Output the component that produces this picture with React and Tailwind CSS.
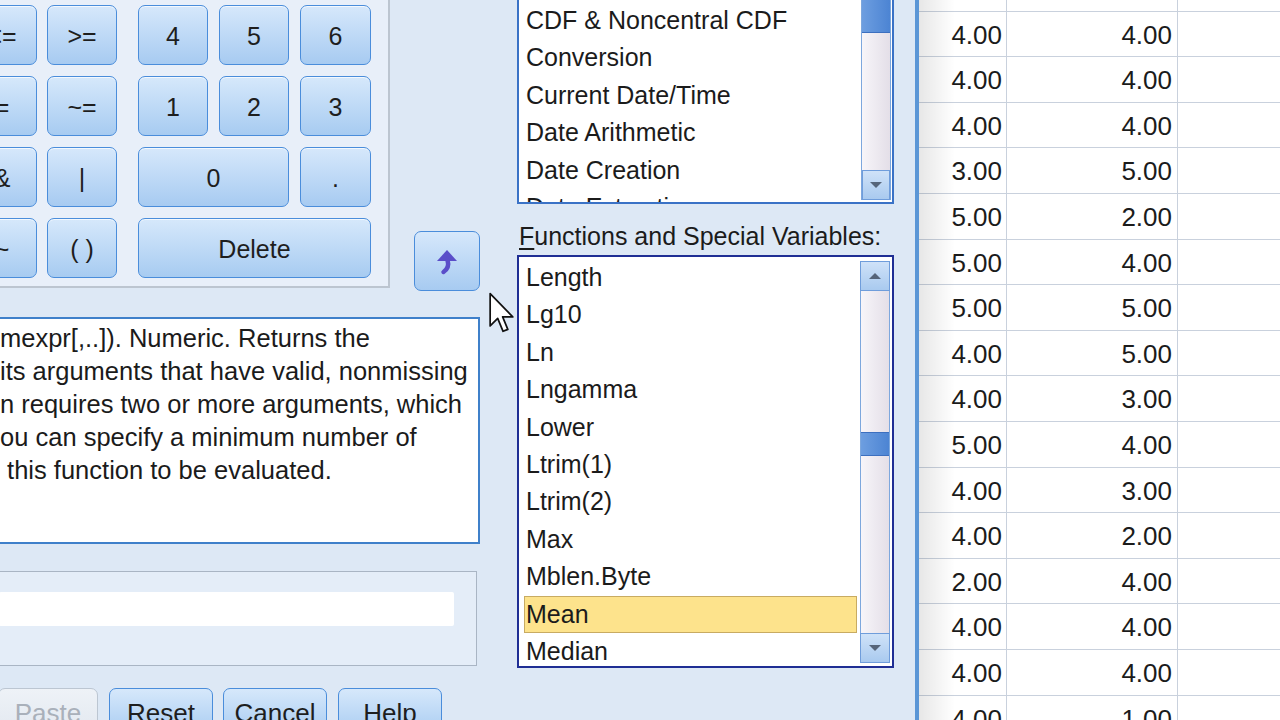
import React from "react";

const FONT = { fontFamily: '"Liberation Sans", Arial, sans-serif' };

function KeyBtn({ children, className = "" }) {
  return (
    <div
      className={
        "h-[60px] rounded-[7px] border-[1.5px] border-[#4a8ddb] bg-gradient-to-b from-[#d6e8fb] to-[#a7cbf1] flex items-center justify-center pt-[4px] text-[25px] text-[#1e1e1e] shadow-[inset_0_1px_0_rgba(255,255,255,0.7)] " +
        className
      }
    >
      {children}
    </div>
  );
}

function DlgBtn({ children, disabled = false, className = "" }) {
  return (
    <div
      className={
        "h-[48px] rounded-[7px] border-[1.5px] flex items-start pt-[5px] justify-center text-[26px] " +
        (disabled
          ? "border-[#bcc6d2] bg-gradient-to-b from-[#eef2f7] to-[#e2e8f0] text-[#a9b0ba] "
          : "border-[#4a8ddb] bg-gradient-to-b from-[#d6e8fb] to-[#a7cbf1] text-[#1e1e1e] ") +
        className
      }
    >
      {children}
    </div>
  );
}

function ArrowTri({ up }) {
  return (
    <svg width="16" height="10" viewBox="0 0 16 10">
      {up ? (
        <path d="M2 8 L8 2 L14 8 Z" fill="#56657a" />
      ) : (
        <path d="M2 2 L14 2 L8 8 Z" fill="#56657a" />
      )}
    </svg>
  );
}

function ScrollArrow({ up }) {
  return (
    <div className="h-[30px] border border-[#6f9ddb] bg-gradient-to-b from-[#cfe2f8] to-[#a9caef] flex items-center justify-center">
      <ArrowTri up={up} />
    </div>
  );
}

const groups = [
  "CDF & Noncentral CDF",
  "Conversion",
  "Current Date/Time",
  "Date Arithmetic",
  "Date Creation",
  "Date Extraction",
];

const funcs = [
  "Length",
  "Lg10",
  "Ln",
  "Lngamma",
  "Lower",
  "Ltrim(1)",
  "Ltrim(2)",
  "Max",
  "Mblen.Byte",
  "Mean",
  "Median",
];

const col1 = ["", "4.00", "4.00", "4.00", "3.00", "5.00", "5.00", "5.00", "4.00", "4.00", "5.00", "4.00", "4.00", "2.00", "4.00", "4.00", "4.00"];
const col2 = ["", "4.00", "4.00", "4.00", "5.00", "2.00", "4.00", "5.00", "5.00", "3.00", "4.00", "3.00", "2.00", "4.00", "4.00", "4.00", "1.00"];

const descLines = [
  "mexpr[,..]). Numeric. Returns the",
  "its arguments that have valid, nonmissing",
  "n requires two or more arguments, which",
  "ou can specify a minimum number of",
  " this function to be evaluated.",
];

export default function App() {
  return (
    <div
      className="w-[1280px] h-[720px] overflow-hidden flex bg-[#dde8f5] relative text-[#1b1b1b]"
      style={FONT}
    >
      {/* Dialog area */}
      <div className="w-[915px] shrink-0 flex">
        {/* Left column */}
        <div className="w-[480px] shrink-0 flex flex-col">
          <div className="flex items-start h-[288px] shrink-0">
            <div className="w-[390px] h-[288px] border-r-2 border-b-2 border-[#bcc5d0] bg-[#e8eff9] overflow-hidden shrink-0">
              <div className="flex pt-[5px] -ml-[33px]">
                <div className="grid grid-cols-[70px_70px] auto-rows-[60px] gap-x-[10px] gap-y-[11px]">
                  <KeyBtn>&lt;=</KeyBtn>
                  <KeyBtn>&gt;=</KeyBtn>
                  <KeyBtn>=</KeyBtn>
                  <KeyBtn>~=</KeyBtn>
                  <KeyBtn>&amp;</KeyBtn>
                  <KeyBtn>|</KeyBtn>
                  <KeyBtn>~</KeyBtn>
                  <KeyBtn>( )</KeyBtn>
                </div>
                <div className="ml-[21px] grid grid-cols-[70px_70px_71px] auto-rows-[60px] gap-x-[11px] gap-y-[11px]">
                  <KeyBtn>4</KeyBtn>
                  <KeyBtn>5</KeyBtn>
                  <KeyBtn>6</KeyBtn>
                  <KeyBtn>1</KeyBtn>
                  <KeyBtn>2</KeyBtn>
                  <KeyBtn>3</KeyBtn>
                  <KeyBtn className="col-span-2">0</KeyBtn>
                  <KeyBtn>.</KeyBtn>
                  <KeyBtn className="col-span-3">Delete</KeyBtn>
                </div>
              </div>
            </div>
            <div className="ml-[24px] mt-[231px] w-[66px] h-[60px] rounded-[7px] border-[1.5px] border-[#4a8ddb] bg-gradient-to-b from-[#d6e8fb] to-[#a7cbf1] flex items-center justify-center">
              <svg width="30" height="30" viewBox="0 0 30 30">
                <path d="M15 4 L25 15 L5 15 Z" fill="#5a4ec9" />
                <path d="M15.5 14 C17 19 16 23 11.5 26" stroke="#5a4ec9" strokeWidth="4.5" fill="none" strokeLinecap="round" />
              </svg>
            </div>
          </div>

          {/* Description box */}
          <div className="mt-[29px] -ml-[2px] w-[482px] h-[227px] border-2 border-[#3f80ca] bg-white pt-[3px] shrink-0 overflow-hidden">
            {descLines.map((l, i) => (
              <div key={i} className="h-[33px] leading-[33px] text-[25.5px] whitespace-pre">
                {l}
              </div>
            ))}
          </div>

          {/* Lower box */}
          <div className="mt-[27px] -ml-[2px] w-[479px] h-[95px] border-[1.5px] border-[#a9b5c4] bg-[#e4edf8] shrink-0 pt-[20px]">
            <div className="h-[34px] mr-[22px] bg-white rounded-[2px]" />
          </div>

          {/* Buttons */}
          <div className="mt-[22px] flex -ml-[2px] shrink-0">
            <DlgBtn disabled className="w-[100px]">Paste</DlgBtn>
            <DlgBtn className="w-[104px] ml-[11px]">Reset</DlgBtn>
            <DlgBtn className="w-[104px] ml-[10px]">Cancel</DlgBtn>
            <DlgBtn className="w-[104px] ml-[11px]">Help</DlgBtn>
          </div>
        </div>

        {/* Right column */}
        <div className="ml-[37px] w-[377px] shrink-0 flex flex-col">
          {/* Function group list */}
          <div className="h-[204px] border-2 border-t-0 border-[#3a72c6] bg-white flex shrink-0 overflow-hidden">
            <div className="flex-1 pt-[2px] pl-[7px] overflow-hidden">
              {groups.map((g) => (
                <div key={g} className="h-[37.4px] leading-[37.4px] text-[25px] whitespace-nowrap">
                  {g}
                </div>
              ))}
            </div>
            <div className="w-[30px] mr-[1px] mb-[2px] flex flex-col border-x border-[#7da7dd]">
              <div className="h-[33px] bg-gradient-to-r from-[#6d9ee0] to-[#4c84d3] border-b border-[#3c6fbf]" />
              <div className="flex-1 bg-gradient-to-r from-[#f7f5f9] to-[#e4dfe8]" />
              <ScrollArrow up={false} />
            </div>
          </div>

          <div className="mt-[16px] h-[33px] leading-[33px] pl-[2px] text-[25px] whitespace-nowrap shrink-0">
            <span className="underline underline-offset-[3px]">F</span>unctions and Special Variables:
          </div>

          {/* Functions list */}
          <div className="mt-[2px] h-[413px] border-2 border-[#1f2e94] bg-white flex shrink-0 overflow-hidden">
            <div className="flex-1 pt-[2px] pl-[5px] pr-[3px] overflow-hidden">
              {funcs.map((f) => (
                <div
                  key={f}
                  className={
                    "h-[37.4px] leading-[37.4px] text-[25px] whitespace-nowrap pl-[2px] " +
                    (f === "Mean" ? "bg-[#fde38c] outline outline-1 outline-[#c8ab62] -outline-offset-1" : "")
                  }
                >
                  {f}
                </div>
              ))}
            </div>
            <div className="w-[30px] mr-[2px] pt-[4px] pb-[3px] flex flex-col">
              <ScrollArrow up={true} />
              <div className="flex-1 flex flex-col border-x border-[#7da7dd] bg-gradient-to-r from-[#f7f5f9] to-[#e4dfe8]">
                <div className="h-[141px]" />
                <div className="h-[24px] bg-gradient-to-r from-[#6d9ee0] to-[#4c84d3] border-y border-[#3c6fbf]" />
              </div>
              <ScrollArrow up={false} />
            </div>
          </div>
        </div>
      </div>

      {/* Divider */}
      <div className="w-[4px] shrink-0 bg-[#5b96d6]" />

      {/* Spreadsheet */}
      <div className="flex-1 bg-white relative overflow-hidden">
        <div className="-mt-[34px]">
          {col1.map((v, i) => (
            <div key={i} className="flex h-[45.6px] border-b border-[#c9d1dd]">
              <div className="w-[88px] border-r border-[#c9d1dd] text-right pr-[4px] text-[26px] leading-[46px]">
                {v}
              </div>
              <div className="w-[171px] border-r border-[#c9d1dd] text-right pr-[5px] text-[26px] leading-[46px]">
                {col2[i]}
              </div>
              <div className="flex-1" />
            </div>
          ))}
        </div>
        <div className="absolute left-0 top-0 bottom-0 w-[36px] bg-gradient-to-r from-[#00000018] to-transparent pointer-events-none" />
      </div>

      {/* Mouse cursor */}
      <svg className="absolute left-[488px] top-[291px]" width="28" height="44" viewBox="0 0 13 20">
        <path d="M1 1 L1 16 L4.5 12.5 L7 18.5 L9.2 17.6 L6.8 11.8 L11.5 11.8 Z" fill="white" stroke="#111" strokeWidth="0.8" strokeLinejoin="round" />
      </svg>
    </div>
  );
}
